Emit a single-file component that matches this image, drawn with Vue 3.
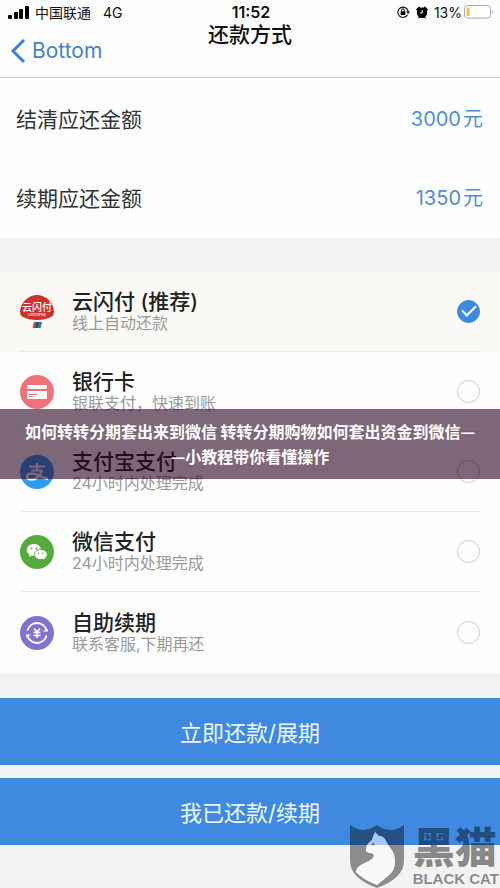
<template>
  <div class="page">
    <header class="header">
      <div class="status">
        <div class="status-left">
          <svg class="signal" viewBox="0 0 21 13" aria-hidden="true">
            <rect x="0" y="9" width="4" height="4" rx="1" />
            <rect x="6" y="6" width="4" height="7" rx="1" />
            <rect x="11" y="3" width="4" height="10" rx="1" />
            <rect x="17" y="0" width="4" height="13" rx="1" />
          </svg>
          <span>中国联通</span>
          <span class="network">4G</span>
        </div>
        <div class="time">11:52</div>
        <div class="status-right">
          <svg class="lock" viewBox="0 0 14 14" aria-hidden="true">
            <path d="M11.6 9.8A5.2 5.2 0 1 1 12.2 6.6" fill="none" stroke="#111" stroke-width="1.2" />
            <path d="M10.2 6.4h3.8l-1.9 2.6z" />
            <rect x="4.6" y="6.3" width="4.8" height="3.8" rx=".5" />
            <path d="M5.6 6.5V5.2a1.4 1.4 0 0 1 2.8 0v1.3" fill="none" stroke="#111" />
          </svg>
          <svg class="alarm" viewBox="0 0 12 13" aria-hidden="true">
            <circle cx="6" cy="6.8" r="5.2" />
            <path d="M0 3.2L3.2.4l1.6 1.4L1.2 5zM12 3.2L8.8.4 7.2 1.8 10.8 5zM1.6 12.8l1.8-2.6 1.4 1zM10.4 12.8l-1.8-2.6-1.4 1z" />
            <path d="M6.2 4v3H3.8" fill="none" stroke="#fff" />
          </svg>
          <span>13%</span>
          <svg class="battery" viewBox="0 0 30 14" aria-hidden="true">
            <rect x=".5" y=".5" width="26" height="12.6" rx="3" fill="#fff" stroke="#aaa" />
            <rect x="2.5" y="2.5" width="3" height="8.6" rx="1" fill="#f0c24c" />
            <path d="M28 4.8q1.6 2 0 4z" fill="#999" />
          </svg>
        </div>
      </div>
      <nav class="nav">
        <a class="back" href="#">
          <svg viewBox="0 0 16 26" aria-hidden="true">
            <path d="M14 2L3 13l11 11" fill="none" stroke="currentColor" stroke-width="3" />
          </svg>
          <span>Bottom</span>
        </a>
        <h1 class="title">还款方式</h1>
      </nav>
    </header>

    <section class="amounts">
      <div v-for="item in amounts" :key="item.label" class="amount">
        <span>{{ item.label }}</span>
        <span class="amount-value">{{ item.value }}<span class="unit">元</span></span>
      </div>
    </section>

    <section class="methods">
      <label
        v-for="item in methods"
        :key="item.id"
        class="method"
        :class="{ 'is-selected': selected === item.id }"
      >
        <span class="method-inner">
          <svg v-if="item.id === 'unionpay'" class="method-icon" viewBox="0 0 34 34" aria-hidden="true">
            <path d="M17 0C25 0 34 7 34 17q0 3-2 4.500Q26 25 17 25T2 21.500Q0 20 0 17C0 7 9 0 17 0z" fill="#d0302c" />
            <text x="17" y="15.500" class="logo-text">云闪付</text>
            <text x="17" y="21" class="logo-small">UnionPay</text>
            <path d="M14 27h3l-1.500 6h-3z" fill="#d6403c" />
            <path d="M16.500 27h3L18 33h-3z" fill="#234a80" />
            <path d="M19 27h3l-1.500 6h-3z" fill="#1f8295" />
          </svg>
          <svg v-else-if="item.id === 'card'" class="method-icon" viewBox="0 0 34 34" aria-hidden="true">
            <circle cx="17" cy="17" r="17" fill="#ed7376" />
            <rect x="7" y="10" width="20" height="4" rx="1" fill="#fff" />
            <path d="M7 16h20v7q0 1-1 1H8q-1 0-1-1z" fill="#fff" />
            <path d="M9 19.500h8M9 21.500h4" stroke="#ed7376" />
          </svg>
          <svg v-else-if="item.id === 'alipay'" class="method-icon" viewBox="0 0 34 34" aria-hidden="true">
            <circle cx="17" cy="17" r="17" fill="#2d9bee" />
            <g fill="none" stroke="#fff" stroke-width="2">
              <path d="M9 11.500h16M11 15.500h11M17 8v7" />
              <path d="M22 15.500c-2 5-6 9-10.500 9-3 0-4.500-1-4.500-3S8.500 18.500 12 18.500c5 0 9 3.500 16 5.500" stroke-width="2.400" />
            </g>
          </svg>
          <svg v-else-if="item.id === 'wechat'" class="method-icon" viewBox="0 0 34 34" aria-hidden="true">
            <circle cx="17" cy="17" r="17" fill="#54ab3c" />
            <path d="M14 9c-4 0-7.200 2.500-7.200 6 0 2 1 3.500 2.600 4.600L8.800 22l2.900-1.500c1 .3 2 .4 3.100.4C20 20.500 21.500 18 21 14.500 20.500 11 17.500 9 14 9z" fill="#fff" />
            <path d="M20.800 14.400c-3.700 0-6.400 2.300-6.400 5.100s2.700 5.100 6.400 5.100c.8 0 1.600-.1 2.300-.3l2.400 1.300-.6-2.100c1.500-1 2.400-2.400 2.400-4 0-2.800-2.800-5.100-6.500-5.100z" fill="#fff" stroke="#54ab3c" />
            <g fill="#54ab3c">
              <circle cx="11.500" cy="13.400" r="1" /><circle cx="16.500" cy="13.400" r="1" />
              <circle cx="18.600" cy="18.200" r=".8" /><circle cx="22.900" cy="18.200" r=".8" />
            </g>
          </svg>
          <svg v-else class="method-icon" viewBox="0 0 34 34" aria-hidden="true">
            <circle cx="17" cy="17" r="17" fill="#8472ce" />
            <g fill="none" stroke="#fff" stroke-width="2">
              <path d="M7.500 14.500A9.800 9.800 0 0 1 26.500 14.500M26.500 19.500A9.800 9.800 0 0 1 7.500 19.500" />
              <path d="M14 12.500l3 3.500 3-3.500M17 16v6M13.500 16.500h7M13.500 19.500h7" stroke-width="1.600" />
            </g>
            <path d="M22.500 15.500h5.500V13zM11.500 18.500H6V21z" fill="#fff" />
          </svg>
          <span class="method-text">
            <span class="method-name">{{ item.name }}</span>
            <span class="method-desc">{{ item.desc }}</span>
          </span>
          <input v-model="selected" class="method-radio" type="radio" name="method" :value="item.id" />
        </span>
      </label>
    </section>

    <div class="actions">
      <button type="button" class="action">立即还款/展期</button>
      <button type="button" class="action">我已还款/续期</button>
    </div>

    <div class="banner">如何转转分期套出来到微信 转转分期购物如何套出资金到微信——小教程带你看懂操作</div>

    <div class="watermark">
      <svg class="shield" viewBox="0 0 54 63" aria-hidden="true">
        <path :d="shieldPath + catPath" fill="#000" fill-opacity=".42" fill-rule="evenodd" />
        <path :d="catPath" fill="#fff" fill-opacity=".55" />
        <path d="M21 19.500l3.500-2-1 3z" fill="#315f96" />
      </svg>
      <div class="brand">
        <span class="brand-cn">黑猫</span>
        <span class="brand-en">BLACK CAT</span>
      </div>
    </div>
  </div>
</template>

<script setup>
import { ref } from 'vue'

const selected = ref('unionpay')

const amounts = [
  { label: '结清应还金额', value: '3000' },
  { label: '续期应还金额', value: '1350' },
]

const methods = [
  { id: 'unionpay', name: '云闪付 (推荐)', desc: '线上自动还款' },
  { id: 'card', name: '银行卡', desc: '银联支付，快速到账' },
  { id: 'alipay', name: '支付宝支付', desc: '24小时内处理完成' },
  { id: 'wechat', name: '微信支付', desc: '24小时内处理完成' },
  { id: 'self', name: '自助续期', desc: '联系客服,下期再还' },
]

const shieldPath = 'M0 0q7 5 14 5Q22 4 27 0q5 4 13 5 7 0 14-5v36q0 17-27 27Q0 53 0 36z'
const catPath =
  'M25 7l4 4q5 0 7 5 2 4 5 8 4 5 4 13 0 9-7 14l-11 9Q12 54 6 47c0-5 6-8 13-11q5-3 5-6-1-2-4-2-5-1-4-4 0-5 6-9 1-4 3-8z'
</script>

<style>
body {
  margin: 0;
  background: #f2f2f2;
}
</style>

<style scoped>
.page {
  position: relative;
  min-height: 100vh;
  overflow: hidden;
  background: #f2f2f2;
  color: #222;
  font-family: Inter, "Noto Sans CJK SC", sans-serif;
}

.header {
  background: #fdfdfd;
  border-bottom: 1px solid #ccc;
}

.status {
  display: grid;
  grid-template-columns: 1fr auto 1fr;
  align-items: center;
  height: 24px;
  padding: 0 6px 0 8px;
  color: #111;
  font-size: 14px;
}

.status-left,
.status-right {
  display: flex;
  align-items: center;
}

.status-right {
  justify-content: flex-end;
}

.signal {
  width: 21px;
  height: 13px;
  margin-right: 6px;
}

.network {
  margin-left: 12px;
}

.time {
  font-size: 16px;
  font-weight: 600;
}

.lock {
  width: 14px;
  height: 14px;
  margin-right: 6px;
}

.alarm {
  width: 12px;
  height: 13px;
  margin-right: 6px;
}

.battery {
  width: 30px;
  height: 14px;
  margin-left: 2px;
}

.nav {
  display: grid;
  grid-template-columns: 1fr auto 1fr;
  align-items: center;
  height: 53px;
  padding: 0 10px;
}

.back {
  display: flex;
  align-items: center;
  gap: 6px;
  color: #4a80cc;
  font-size: 21px;
  text-decoration: none;
}

.back svg {
  width: 16px;
  height: 26px;
  color: #3f7fe0;
}

.title {
  align-self: start;
  margin: 0;
  color: #111;
  font-size: 21px;
  font-weight: 500;
  line-height: 22px;
}

.amounts {
  padding-bottom: 2px;
  background: #fefefe;
}

.amount {
  display: flex;
  align-items: center;
  justify-content: space-between;
  height: 79px;
  padding: 0 17px 0 16px;
  color: #333;
  font-size: 21px;
}

.amount-value {
  color: #4a90d9;
  font-size: 20px;
}

.unit {
  margin-left: 2px;
}

.methods {
  margin-top: 34px;
  background: #fefefe;
}

.method {
  display: block;
  padding: 0 20px;
  cursor: pointer;
}

.method.is-selected {
  background: #faf9f5;
}

.method-inner {
  display: flex;
  align-items: center;
  height: 80px;
  border-bottom: 1px solid #ebebeb;
  box-sizing: border-box;
}

.method:last-child .method-inner {
  height: 81px;
  border-bottom: 0;
}

.method-icon {
  flex: none;
  width: 34px;
  height: 34px;
}

.logo-text {
  fill: #fff;
  font-size: 10px;
  font-weight: 500;
  text-anchor: middle;
}

.logo-small {
  fill: #fff;
  font-size: 4px;
  text-anchor: middle;
}

.method-text {
  display: flex;
  flex: 1;
  flex-direction: column;
  margin-left: 18px;
}

.method-name {
  font-size: 21px;
  font-weight: 500;
  line-height: 22px;
}

.method-desc {
  color: #999;
  font-size: 16px;
  line-height: 20px;
}

.method-radio {
  position: relative;
  flex: none;
  width: 23px;
  height: 23px;
  margin: 0;
  appearance: none;
  border: 1px solid #ccc;
  border-radius: 50%;
}

.method-radio:checked {
  border-color: #3d89e0;
  background: #3d89e0;
}

.method-radio:checked::after {
  content: "";
  position: absolute;
  top: 4px;
  left: 4px;
  width: 12px;
  height: 6px;
  border-bottom: 2px solid #fff;
  border-left: 2px solid #fff;
  transform: rotate(-45deg);
}

.actions {
  display: flex;
  flex-direction: column;
  gap: 13px;
  margin-top: 25px;
}

.action {
  height: 67px;
  padding: 0 0 2px;
  border: 0;
  background: #3f8ae0;
  color: #f0f8ff;
  font-family: inherit;
  font-size: 22px;
  font-weight: 400;
}

.banner {
  position: absolute;
  top: 409px;
  right: 0;
  left: 0;
  padding: 10px 20px;
  background: rgba(42, 1, 33, 0.6);
  color: #fff;
  font-family: "Noto Sans CJK SC", sans-serif;
  font-size: 16px;
  font-weight: 700;
  line-height: 25px;
  line-break: anywhere;
  text-align: center;
}

.watermark {
  position: absolute;
  right: 1px;
  bottom: 0;
  display: flex;
  align-items: flex-end;
  gap: 9px;
}

.shield {
  width: 54px;
  height: 63px;
}

.brand {
  display: flex;
  flex-direction: column;
  color: rgba(0, 0, 0, 0.45);
}

.brand-cn {
  font-size: 42px;
  font-weight: 900;
  line-height: 44px;
}

.brand-en {
  font-family: "Liberation Sans", sans-serif;
  font-size: 15px;
  font-weight: 700;
  line-height: 18px;
  white-space: nowrap;
}
</style>
